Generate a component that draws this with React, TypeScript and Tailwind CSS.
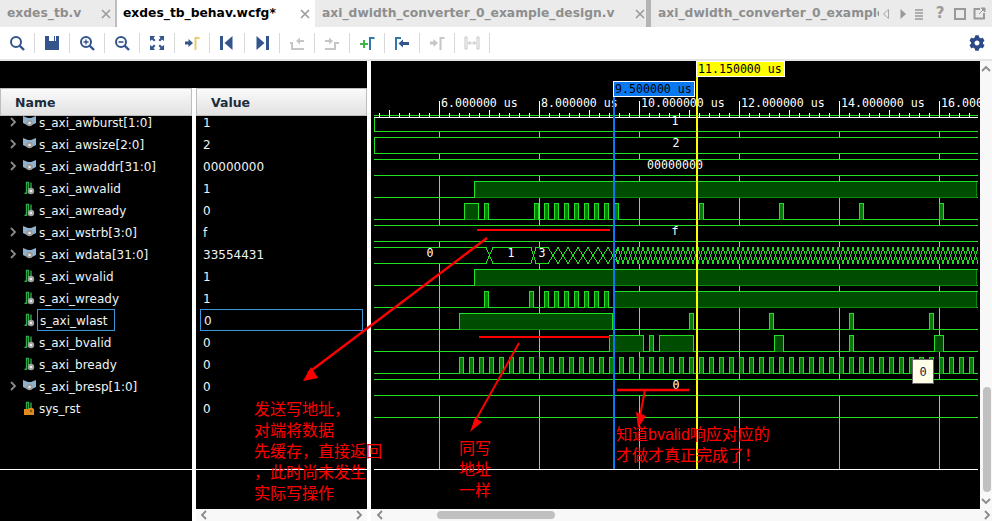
import React from 'react';
import { FaCog } from 'react-icons/fa';

const BLUE = '#33558c';
const GRAY = '#c6c6c6';

// Toolbar icons, all on a 16px box
const lens = (color: string) => (
  <>
    <circle cx="7" cy="7" r="5" fill="none" stroke={color} strokeWidth="2" />
    <path d="M10.5 10.5L15 15" stroke={color} strokeWidth="2.4" />
  </>
);

const toolIcons: React.ReactNode[] = [
  lens(BLUE),
  <>
    <path d="M1 1H5V6H10V1H11V6H12V1H15V15H1Z" fill={BLUE} />
  </>,
  <>
    {lens(BLUE)}
    <path d="M4.5 7H9.5M7 4.5V9.5" stroke={BLUE} strokeWidth="1.4" />
  </>,
  <>
    {lens(BLUE)}
    <path d="M4.5 7H9.5" stroke={BLUE} strokeWidth="1.6" />
  </>,
  <>
    <path d="M1 1H6L4.5 3L6.5 5L5 6.5L3 4.5L1 6Z" fill={BLUE} />
    <path d="M15 1H10L11.5 3L9.5 5L11 6.5L13 4.5L15 6Z" fill={BLUE} />
    <path d="M1 15H6L4.5 13L6.5 11L5 9.5L3 11.5L1 10Z" fill={BLUE} />
    <path d="M15 15H10L11.5 13L9.5 11L11 9.5L13 11.5L15 10Z" fill={BLUE} />
  </>,
  <>
    <path d="M1 6.5H4.5V4L9 8L4.5 12V9.5H1Z" fill={BLUE} />
    <path d="M10.5 15V2H15.5V4H12.5V15Z" fill="#e6cc73" />
  </>,
  <>
    <path d="M1 1H4V15H1Z" fill={BLUE} />
    <path d="M13.5 1V15L5.5 8Z" fill={BLUE} />
  </>,
  <>
    <path d="M2.5 1L10.5 8L2.5 15Z" fill={BLUE} />
    <path d="M12 1H15V15H12Z" fill={BLUE} />
  </>,
  <>
    <path d="M1 7H4V13H15V15H2V9H1Z" fill={GRAY} />
    <path d="M15 5H11V2.5L7 6L11 9.5V7H15Z" fill={GRAY} />
  </>,
  <>
    <path d="M1 5H5V2.5L9 6L5 9.5V7H1Z" fill={GRAY} />
    <path d="M1 13H10V7H15V9H12V15H1Z" fill={GRAY} />
  </>,
  <>
    <path d="M1 8H4V5H6V8H9V10H6V13H4V10H1Z" fill="#3db54a" />
    <path d="M10 15V2H15.5V4H12V15Z" fill="#2f78a8" />
  </>,
  <>
    <path d="M1 15V2H7V4H3V15Z" fill="#2f78a8" />
    <path d="M15 7H9V4.5L4.5 8.5L9 12.5V10H15Z" fill={BLUE} />
  </>,
  <>
    <path d="M1 6.5H4.5V4L9 8L4.5 12V9.5H1Z" fill={GRAY} />
    <path d="M10.5 15V2H15.5V4H12.5V15Z" fill={GRAY} />
  </>,
  <>
    <path d="M1 2H3V14H1ZM13 2H15V14H13Z" fill="none" stroke={GRAY} strokeWidth="1" />
    <path d="M4 8H12M4.5 8L6.5 6M4.5 8L6.5 10M11.5 8L9.5 6M11.5 8L9.5 10" stroke={GRAY} fill="none" />
  </>,
];

// Signal list, top to bottom
const signals: [string, string, 'bus' | 'bit' | 'rst'][] = [
  ['s_axi_awburst[1:0]', '1', 'bus'],
  ['s_axi_awsize[2:0]', '2', 'bus'],
  ['s_axi_awaddr[31:0]', '00000000', 'bus'],
  ['s_axi_awvalid', '1', 'bit'],
  ['s_axi_awready', '0', 'bit'],
  ['s_axi_wstrb[3:0]', 'f', 'bus'],
  ['s_axi_wdata[31:0]', '33554431', 'bus'],
  ['s_axi_wvalid', '1', 'bit'],
  ['s_axi_wready', '1', 'bit'],
  ['s_axi_wlast', '0', 'bit'],
  ['s_axi_bvalid', '0', 'bit'],
  ['s_axi_bready', '0', 'bit'],
  ['s_axi_bresp[1:0]', '0', 'bus'],
  ['sys_rst', '0', 'rst'],
];

const SignalIcon = ({ kind }: { kind: 'bus' | 'bit' | 'rst' }) => {
  if (kind === 'bus') {
    return (
      <svg width="14" height="14" viewBox="0 0 14 14" className="shrink-0">
        <path d="M0 1L5 3H8L13 1V8L9 10H4L0 8Z" fill="#8db2d0" />
        <circle cx="6.5" cy="8" r="3.2" fill="#9a9a9a" />
        <circle cx="6.5" cy="8" r="1.3" fill="#e8e8e8" />
      </svg>
    );
  }
  return (
    <svg width="14" height="14" viewBox="0 0 14 14" className="shrink-0">
      <path d="M1.5 12.3H3.5V1.5H5.5V12.3M8 1.5V8" fill="none" stroke="#2fa84a" strokeWidth="1.4" />
      {kind === 'rst' && <rect x="1" y="8" width="10" height="6" fill="#e08a20" />}
      <circle cx="8" cy="10" r="3.2" fill={kind === 'rst' ? '#e08a20' : '#a0a0a0'} />
      <circle cx="8" cy="10" r="1.3" fill={kind === 'rst' ? '#8a5a10' : '#ececec'} />
    </svg>
  );
};

const CloseX = () => (
  <svg width="10" height="10" viewBox="0 0 10 10" className="shrink-0">
    <path d="M1 1L9 9M9 1L1 9" stroke="#9a9a9a" strokeWidth="1.6" />
  </svg>
);

const Tab = ({ label, active, className }: { label: string; active?: boolean; className: string }) => (
  <div className={`flex items-center shrink-0 ${active ? 'bg-white text-black' : 'text-[#8e8e8e]'} ${className}`}>
    <span className="flex-1 whitespace-nowrap overflow-hidden">{label}</span>
    <CloseX />
  </div>
);

const Chevron = ({ dir }: { dir: 'left' | 'right' | 'up' | 'down' }) => {
  const d = {
    left: 'M6 1L2 5L6 9',
    right: 'M2 1L6 5L2 9',
    up: 'M1 6L5 2L9 6',
    down: 'M1 2L5 6L9 2',
  }[dir];
  const horiz = dir === 'left' || dir === 'right';
  return (
    <svg width={horiz ? 8 : 10} height={horiz ? 10 : 8} viewBox={horiz ? '0 0 8 10' : '0 0 10 8'} className="shrink-0">
      <path d={d} fill="none" stroke="#8a8a8a" strokeWidth="1.8" />
    </svg>
  );
};

// Waveform helpers: coordinates are page pixels, see the svg's viewBox
const BR = '#22e022';
const FILL = '#004c00';
const DARK = '#0a8a0a';
const rowBase = (i: number) => 131 + 22 * i + 0.5;
const seq = (from: number, n: number, step = 10) => Array.from({ length: n }, (_, i) => from + i * step);

const pulses: Record<number, [number, number][]> = {
  3: [[474, 978]],
  4: [
    [464, 479],
    [484, 489],
    ...seq(534, 9).map((x): [number, number] => [x, x + 5]),
    [699, 704],
    [779, 784],
    [859, 864],
    [939, 944],
  ],
  7: [[474, 978]],
  8: [
    [484, 489],
    [529, 534],
    ...seq(544, 7).map((x): [number, number] => [x, x + 5]),
    [614, 978],
  ],
  9: [
    [459, 613],
    [689, 694],
    [769, 774],
    [849, 854],
    [929, 934],
  ],
  10: [
    [609, 644],
    [649, 654],
    [659, 694],
    [774, 784],
    [849, 854],
    [934, 944],
  ],
  11: seq(459, 52).map((x): [number, number] => [x, x + 5]),
};

const busRows = [0, 1, 2, 5, 6, 12];

const zigzag = (from: number, to: number, step: number, top: number, base: number, flip: boolean) => {
  const pts: string[] = [];
  let up = flip;
  for (let x = from; x <= to; x += step) {
    pts.push(`${x},${up ? top : base}`);
    up = !up;
  }
  return pts.join(' ');
};

const WaveCanvas = () => {
  const wTop = rowBase(6) - 16;
  const wBase = rowBase(6);
  return (
    <svg width="609" height="448" viewBox="371 61 609 448" shapeRendering="crispEdges" className="block shrink-0">
      {/* grid */}
      {seq(439, 6, 100).map((x) => (
        <path key={x} d={`M${x + 0.5} 117V469`} stroke="#b4b4b4" />
      ))}

      {/* bus rows hide the grid */}
      {busRows.map((r) => (
        <g key={r}>
          <rect x="374" y={rowBase(r) - 16} width="604" height="16" fill="#000" />
          <path d={`M374 ${rowBase(r) - 16}H978M374 ${rowBase(r)}H978`} stroke={BR} fill="none" />
        </g>
      ))}
      <path d="M374.5 117V131M374.5 137V153" stroke={BR} />

      {/* wdata transitions: flat stretches are broken by crossings */}
      <rect x="374" y={wTop - 0.5} width="604" height="17" fill="#000" />
      <path d={`M374 ${wTop}H486M374 ${wBase}H486M493 ${wTop}H531M493 ${wBase}H531M536 ${wTop}H548M536 ${wBase}H548`} stroke={BR} fill="none" />
      <path d={`M486 ${wTop}L493 ${wBase}M486 ${wBase}L493 ${wTop}M531 ${wTop}L536 ${wBase}M531 ${wBase}L536 ${wTop}`} stroke={BR} fill="none" />
      <polyline points={zigzag(548, 618, 10, wTop, wBase, true)} fill="none" stroke={BR} />
      <polyline points={zigzag(548, 618, 10, wTop, wBase, false)} fill="none" stroke={BR} />
      <polyline points={zigzag(613, 978, 5, wTop, wBase, true)} fill="none" stroke={BR} />
      <polyline points={zigzag(613, 978, 5, wTop, wBase, false)} fill="none" stroke={BR} />

      {/* single bit rows */}
      {[3, 4, 7, 8, 9, 10, 11, 13].map((r) => {
        const base = rowBase(r);
        const top = base - 16;
        return (
          <g key={r}>
            <path d={`M374 ${base}H978`} stroke={BR} />
            {(pulses[r] || []).map(([a, b]) => {
              const wide = b - a > 6;
              const toEnd = b >= 978;
              return (
                <g key={a}>
                  <rect x={a} y={top} width={(toEnd ? 977 : b) - a} height={16} fill={wide ? FILL : '#067a06'} />
                  <path d={`M${a} ${base}H${toEnd ? 977 : b}`} stroke={DARK} />
                  {toEnd && <path d={`M976.5 ${top}V${base}`} stroke={DARK} />}
                  <path d={`M${a + 0.5} ${base}V${top}H${b - 0.5}${toEnd ? '' : `V${base}`}`} fill="none" stroke={BR} />
                </g>
              );
            })}
          </g>
        );
      })}

      {/* ruler */}
      <path d="M374 117.5H978" stroke="#fff" />
      {seq(379, 60).map((x) => {
        const major = (x - 439) % 100 === 0;
        const mid = (x - 389) % 100 === 0;
        return <path key={x} d={`M${x + 0.5} ${major ? 101 : mid ? 110 : 113}V117`} stroke="#fff" />;
      })}
      {[
        ['6.000000 us', 441],
        ['8.000000 us', 541],
        ['10.000000 us', 641],
        ['12.000000 us', 741],
        ['14.000000 us', 841],
        ['16.000000 us', 941],
      ].map(([t, x]) => (
        <text key={t} x={x} y="107" fill="#fff" className="font-['DejaVu_Sans_Mono',monospace] text-[11.6px]">
          {t}
        </text>
      ))}

      {/* values on the bus rows */}
      {[
        ['1', 675, 125],
        ['2', 676, 147],
        ['00000000', 675, 169],
        ['f', 675, 235],
        ['0', 430, 257],
        ['1', 511, 257],
        ['3', 542, 257],
        ['0', 676, 389],
      ].map(([t, x, y]) => (
        <text key={`${t}${x}${y}`} x={x} y={y} textAnchor="middle" fill="#fff" className="font-['DejaVu_Sans_Mono',monospace] text-[11.6px]">
          {t}
        </text>
      ))}

      <path d="M374 469.5H978" stroke="#fff" />

      {/* cursors */}
      <rect x="613" y="97" width="2" height="372" fill="#0a78f0" />
      <rect x="696" y="77" width="2" height="392" fill="#ffff00" />
      <rect x="613.5" y="81.5" width="81" height="15" fill="#0a78f0" stroke="#fff" />
      <text x="615" y="93" fill="#000" className="font-['DejaVu_Sans_Mono',monospace] text-[11.6px]">
        9.500000 us
      </text>
      <rect x="696.5" y="61.5" width="88" height="15" fill="#ffff00" stroke="#fff" />
      <text x="698" y="73" fill="#000" className="font-['DejaVu_Sans_Mono',monospace] text-[11.6px]">
        11.150000 us
      </text>
    </svg>
  );
};

const Note = ({ lines, className }: { lines: string[]; className: string }) => (
  <div className={`absolute text-[16px] text-[#ff0000] whitespace-nowrap font-['Liberation_Sans','Noto_Sans_CJK_SC',sans-serif] ${className}`}>
    {lines.map((l) => (
      <div key={l} className="h-[21px] leading-[21px]">
        {l}
      </div>
    ))}
  </div>
);

export default function App() {
  return (
    <div className="relative w-[992px] h-[521px] overflow-hidden bg-black font-['DejaVu_Sans',sans-serif]">
      {/* Tab strip */}
      <div className="flex h-[27px] bg-[#ebebeb] text-[12.3px] font-bold">
        <Tab label="exdes_tb.v" className="w-[117px] pl-[7px] pr-[4px] border-r-2 border-[#bdbdbd]" />
        <Tab label="exdes_tb_behav.wcfg*" active className="w-[198px] pl-[6px] pr-[5px]" />
        <Tab label="axi_dwidth_converter_0_example_design.v" className="w-[331px] pl-[7px] pr-[1px]" />
        <div className="w-[5px] shrink-0 bg-[#b4b4b4]" />
        <div className="w-[228px] shrink-0 pl-[7px] flex items-center text-[#8e8e8e] overflow-hidden whitespace-nowrap">
          axi_dwidth_converter_0_example_design.v
        </div>
        <div className="flex-1 flex items-center pl-[3px] gap-[7px] text-[#9a9a9a]">
          <svg width="8" height="12" viewBox="0 0 8 12" className="shrink-0">
            <path d="M6.5 1.5L1.5 6L6.5 10.5Z" fill="none" stroke="#a8a8a8" />
          </svg>
          <svg width="8" height="12" viewBox="0 0 8 12" className="shrink-0 ml-[2px]">
            <path d="M1.5 1L7 6L1.5 11Z" fill="#999" />
          </svg>
          <svg width="10" height="12" viewBox="0 0 10 12" className="shrink-0">
            <path d="M1 2H9M1 5H9M1 8H9M1 11H9" stroke="#999" strokeWidth="1.5" />
          </svg>
          <span className="w-[12px] shrink-0 ml-[3px] text-[15px] leading-none text-center">?</span>
          <svg width="12" height="12" viewBox="0 0 12 12" className="shrink-0 ml-[1px]">
            <rect x="1" y="1" width="10" height="10" fill="none" stroke="#999" strokeWidth="2" />
          </svg>
          <svg width="13" height="13" viewBox="0 0 13 13" className="shrink-0">
            <path d="M7 2H1.5V11.5H11V6" fill="none" stroke="#999" strokeWidth="2" />
            <path d="M8 1H12V5ZM6 7L10 3" fill="#999" stroke="#999" />
          </svg>
        </div>
      </div>

      {/* Toolbar */}
      <div className="flex items-center h-[32px] bg-white">
        {toolIcons.map((icon, i) => (
          <div key={i} className="w-[35px] h-[20px] shrink-0 flex items-center justify-center border-r border-[#d8d8d8]">
            <svg width="16" height="16" viewBox="0 0 16 16">
              {icon}
            </svg>
          </div>
        ))}
        <FaCog className="ml-auto mr-[7px] w-[16px] h-[16px] text-[#2c4a87]" />
      </div>
      <div className="h-[2px] bg-[#e4e4e4]" />

      {/* Main area */}
      <div className="flex h-[460px]">
        <div className="w-[367px] flex flex-col shrink-0">
          <div className="h-[27px] bg-black" />
          <div className="flex flex-1 min-h-0">
            {/* Names */}
            <div className="w-[192px] shrink-0 flex flex-col bg-black">
              <div className="h-[28px] flex items-center pl-[14px] pt-[2px] bg-gradient-to-b from-[#fafafa] to-[#e2e2e2] border border-[#bdbdbd] text-[12.5px] font-bold text-[#1c2c3c]">
                Name
              </div>
              <div className="h-[353px] overflow-hidden">
                <div className="-mt-[5px]">
                  {signals.map(([name, , kind], i) => (
                    <div key={name} className="flex items-center h-[22px] text-[12px] text-[#eef4f4]">
                      <div className="w-[9px] ml-[9px] mr-[5px] shrink-0">{kind === 'bus' && <Chevron dir="right" />}</div>
                      <SignalIcon kind={kind} />
                      <span className={`pl-[2px] h-[22px] ${i === 9 ? 'w-[78px] border border-[#3a96dd] leading-[22px] -ml-[0px] pl-[1px]' : 'leading-[24px]'}`}>
                        {name}
                      </span>
                    </div>
                  ))}
                </div>
              </div>
              <div className="h-px bg-white" />
            </div>
            <div className="w-[4px] shrink-0 bg-white" />
            {/* Values */}
            <div className="w-[171px] shrink-0 flex flex-col bg-black">
              <div className="h-[28px] flex items-center pl-[14px] pt-[2px] bg-gradient-to-b from-[#fafafa] to-[#e2e2e2] border border-[#bdbdbd] text-[12.5px] font-bold text-[#1c2c3c]">
                Value
              </div>
              <div className="h-[353px] overflow-hidden">
                <div className="-mt-[5px]">
                  {signals.map(([name, value], i) => (
                    <div
                      key={name}
                      className={`ml-[4px] mr-[4px] h-[22px] pl-[3px] text-[12px] text-[#eef4f4] ${i === 9 ? 'border border-[#3a96dd] leading-[22px] pl-[2px]' : 'leading-[24px]'}`}
                    >
                      {value}
                    </div>
                  ))}
                </div>
              </div>
              <div className="h-px bg-white" />
              <div className="h-[39px]" />
              <div className="h-[12px] flex items-center justify-between px-[4px] bg-[#f8f8f8]">
                <Chevron dir="left" />
                <Chevron dir="right" />
              </div>
            </div>
          </div>
        </div>
        <div className="w-[4px] shrink-0 bg-white" />
        {/* Waveform */}
        <div className="flex-1 flex flex-col min-w-0">
          <div className="flex h-[448px]">
            <WaveCanvas />
            <div className="w-[12px] flex flex-col items-center bg-[#f8f8f8] py-[4px]">
              <Chevron dir="up" />
              <div className="flex-1 relative w-full">
                <div className="absolute left-[3px] right-[1px] top-[314px] h-[105px] rounded bg-[#c0c0c0]" />
              </div>
              <Chevron dir="down" />
            </div>
          </div>
          <div className="h-[12px] flex items-center pl-[5px] pr-[1px] bg-[#f8f8f8]">
            <Chevron dir="left" />
            <div className="ml-[53px] w-[118px] h-[8px] rounded bg-[#c0c0c0]" />
            <div className="ml-auto">
              <Chevron dir="right" />
            </div>
          </div>
        </div>
      </div>

      {/* Hand drawn notes over the panels */}
      <svg width="992" height="521" viewBox="0 0 992 521" className="absolute inset-0 pointer-events-none">
        <g stroke="#ff0000" strokeWidth="2" fill="none">
          <path d="M477 230H610" />
          <path d="M487 238L308 373" strokeWidth="2.4" />
          <path d="M479 337H610" />
          <path d="M519 343L474 423" />
          <path d="M617 390H689" strokeWidth="2.4" />
          <path d="M645 390L640 416" />
        </g>
        <path d="M303 381L311 367L318 378Z" fill="#ff0000" />
        <path d="M470 432L475 418L482 422Z" fill="#ff0000" />
        <path d="M638 428L636 412L646 416Z" fill="#ff0000" />
      </svg>

      <Note className="left-[254px] top-[399px]" lines={['发送写地址，', '对端将数据', '先缓存，直接返回', '，此时尚未发生', '实际写操作']} />
      <Note className="left-[459px] top-[438px]" lines={['同写', '地址', '一样']} />
      <Note className="left-[616px] top-[424px]" lines={['知道bvalid响应对应的', '才做才真正完成了！']} />

      {/* Value tooltip under the pointer */}
      <div className="absolute left-[912px] top-[359px] w-[22px] h-[25px] flex items-center justify-center bg-[#ffffe8] border border-[#666] text-[12px] text-[#1c1c50] font-['DejaVu_Sans_Mono',monospace]">
        0
      </div>
    </div>
  );
}
